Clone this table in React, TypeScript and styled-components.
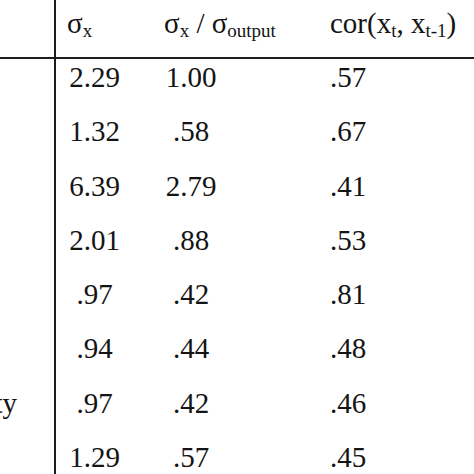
import styled, { createGlobalStyle } from 'styled-components';

const Global = createGlobalStyle`
  html, body {
    margin: 0;
    padding: 0;
    background: #fff;
  }
  body {
    width: 474px;
    height: 474px;
    overflow: hidden;
    font-family: "Liberation Serif", "Times New Roman", serif;
    color: #141414;
  }
`;

const Table = styled.div`
  display: grid;
  grid-template-columns: 54px 2px 94px 150px 174px;
  width: 474px;
  font-size: 29px;
  line-height: 32px;
`;

const Rule = styled.div`
  grid-column: 1 / -1;
  height: 2px;
  background: #1c1c1c;
`;

const VLine = styled.div<{ $span: number }>`
  grid-column: 2;
  grid-row: ${p => `span ${p.$span}`};
  background: #1c1c1c;
`;

const HeadCell = styled.div<{ $pad: number }>`
  height: 57px;
  box-sizing: border-box;
  padding: 7px 0 0 ${p => p.$pad}px;
  white-space: nowrap;
`;

const LabelCell = styled.div`
  height: 54.3px;
  box-sizing: border-box;
  padding: 2px 37px 0 0;
  display: flex;
  justify-content: flex-end;
  white-space: nowrap;
`;

const DataCell = styled.div<{ $w: number }>`
  height: 54.3px;
  box-sizing: border-box;
  padding-top: 2px;
  width: ${p => p.$w}px;
  text-align: center;
  white-space: nowrap;
`;

const Sub = styled.sub`
  font-size: 19px;
  vertical-align: -4px;
  line-height: 0;
`;

const rows: [string, string, string, string][] = [
  ['', '2.29', '1.00', '.57'],
  ['', '1.32', '.58', '.67'],
  ['', '6.39', '2.79', '.41'],
  ['', '2.01', '.88', '.53'],
  ['', '.97', '.42', '.81'],
  ['', '.94', '.44', '.48'],
  ['Labor productivity', '.97', '.42', '.46'],
  ['', '1.29', '.57', '.45'],
];

export default function App() {
  return (
    <>
      <Global />
      <Table>
        <HeadCell $pad={0} />
        <VLine $span={1} />
        <HeadCell $pad={11}>
          σ<Sub>x</Sub>
        </HeadCell>
        <HeadCell $pad={14}>
          σ<Sub>x</Sub> / σ<Sub>output</Sub>
        </HeadCell>
        <HeadCell $pad={30}>
          cor(x<Sub>t</Sub>, x<Sub>t-1</Sub>)
        </HeadCell>
        <Rule />
        <VLine $span={rows.length} style={{ gridRow: `3 / span ${rows.length}` }} />
        {rows.map((r, i) => (
          <Row key={i} r={r} />
        ))}
      </Table>
    </>
  );
}

function Row({ r }: { r: [string, string, string, string] }) {
  return (
    <>
      <LabelCell>{r[0]}</LabelCell>
      <DataCell $w={77} style={{ gridColumn: 3 }}>{r[1]}</DataCell>
      <DataCell $w={82}>{r[2]}</DataCell>
      <DataCell $w={96}>{r[3]}</DataCell>
    </>
  );
}
